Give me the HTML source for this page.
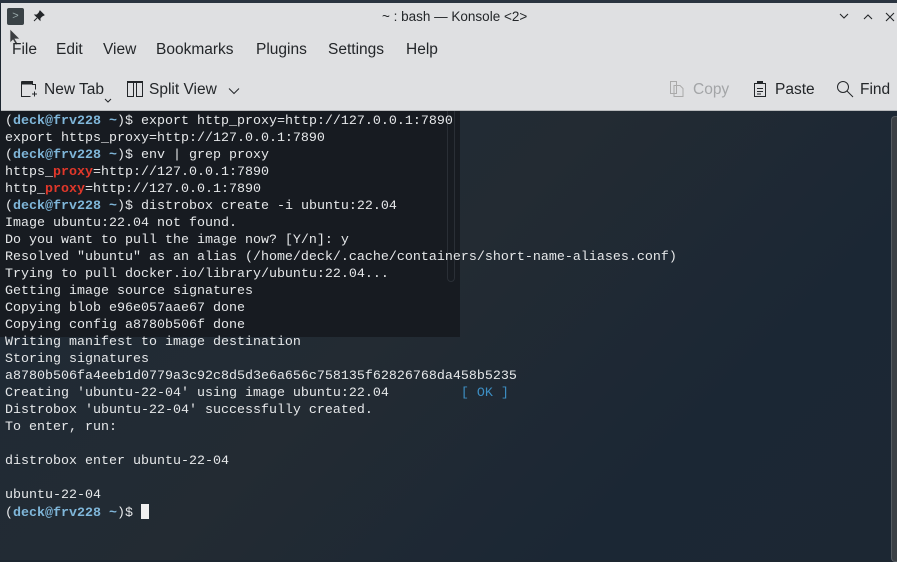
<!DOCTYPE html>
<html><head><style>
body{margin:0;width:897px;height:560px;overflow:hidden;background:#1d2630;font-family:"Liberation Sans","DejaVu Sans",sans-serif;position:relative}
.top{position:absolute;left:0;top:0;width:897px;height:3px;background:#2a3440}
.win{position:absolute;left:1px;top:3px;width:896px;height:107px;background:#dfe0e2;border-bottom:1px solid #b8babc}
.t{position:absolute;font-size:15.5px;color:#232629;white-space:nowrap}
.term{position:absolute;left:0;top:111px;width:897px;height:449px;background:linear-gradient(135deg,#1e2a36 0%,#232b33 45%,#1b2734 75%,#1c2733 100%)}
.panel{position:absolute;left:0;top:111px;width:460px;height:226px;background:#171b21}
.panel .sb{position:absolute;left:447px;top:0;width:6px;height:170px;border:1px solid #2a2f36;border-top:none;border-radius:0 0 4px 4px}
pre{position:absolute;left:5px;top:113px;margin:0;font-family:"Liberation Mono","DejaVu Sans Mono",monospace;font-size:13.33px;line-height:17px;color:#e6e8ea}
.b{color:#7fb6d9;font-weight:bold}
.r{color:#e0372a;font-weight:bold}
.ok{color:#3d8fc4}
.cur{display:inline-block;width:8px;height:15px;background:#f0f0f0;vertical-align:-3px}
.scroll{position:absolute;left:891px;top:116px;width:6px;height:444px;background:#3b4045;border-radius:4px 0 0 4px;border:1px solid #555b60;border-right:none}
</style></head><body>
<div class="top"></div>
<div class="term"></div>
<div class="panel"><div class="sb"></div></div>
<div class="scroll"></div>
<div class="win">
  <div style="position:absolute;left:6px;top:5px;width:17px;height:17px;background:#3a4246;border-radius:2px;color:#9aa;font-size:11px;text-align:center;line-height:17px">&gt;</div>
  <svg style="position:absolute;left:32px;top:7px" width="12" height="12" viewBox="0 0 12 12"><path d="M7 1l4 4-2 1-2 2 0 2-5-5 2 0 2-2z M4 8l-3 3" stroke="#232629" fill="#232629" stroke-width="1"/></svg>
  <svg style="position:absolute;left:8px;top:25px" width="12" height="18" viewBox="0 0 12 18"><path d="M1 1v14l3-3 3 5 2-1-3-5h5z" fill="#3a3d40" stroke="#ddd" stroke-width=".7"/></svg>
  <div class="t" style="left:381px;top:6px;font-size:13.5px">~ : bash — Konsole &lt;2&gt;</div>
  <svg style="position:absolute;left:838px;top:9px" width="60" height="10" viewBox="0 0 60 10"><path d="M1 2l4 4 4-4 M25 7l4-4 4 4 M47 1l8 8 M55 1l-8 8" stroke="#232629" fill="none" stroke-width="1.1"/></svg>
  <div class="t" style="left:11px;top:38px">File</div>
  <div class="t" style="left:55px;top:38px">Edit</div>
  <div class="t" style="left:102px;top:38px">View</div>
  <div class="t" style="left:155px;top:38px">Bookmarks</div>
  <div class="t" style="left:255px;top:38px">Plugins</div>
  <div class="t" style="left:327px;top:38px">Settings</div>
  <div class="t" style="left:405px;top:38px">Help</div>
  <svg style="position:absolute;left:19px;top:77px" width="18" height="18" viewBox="0 0 18 18"><path d="M1.5 1.5h11v3h3v5 M1.5 1.5v15h9 M12 14h5 M14.5 11.5v5" stroke="#232629" fill="none"/><rect x="1.5" y="1.5" width="11" height="3" fill="#232629"/></svg>
  <div class="t" style="left:43px;top:78px">New Tab</div>
  <svg style="position:absolute;left:103px;top:95px" width="8" height="5" viewBox="0 0 8 5"><path d="M1 1l3 3 3-3" stroke="#232629" fill="none"/></svg>
  <svg style="position:absolute;left:125px;top:77px" width="18" height="18" viewBox="0 0 18 18"><path d="M1.5 1.5h6v15h-6z M10.5 1.5h6v15h-6z" stroke="#232629" fill="none"/><rect x="1" y="1" width="16" height="2" fill="#232629"/></svg>
  <div class="t" style="left:148px;top:78px">Split View</div>
  <svg style="position:absolute;left:227px;top:84px" width="12" height="8" viewBox="0 0 12 8"><path d="M1 1.5l5 5 5-5" stroke="#232629" fill="none"/></svg>
  <svg style="position:absolute;left:668px;top:77px" width="16" height="18" viewBox="0 0 16 18"><path d="M1.5 1.5h6v12h-6z M5 5.5h6l3 3v8h-9z" stroke="#aaa" fill="none"/></svg>
  <div class="t" style="left:692px;top:78px;color:#a3a5a7">Copy</div>
  <svg style="position:absolute;left:752px;top:77px" width="14" height="18" viewBox="0 0 14 18"><path d="M1.5 3.5h11v13h-11z M4 8.5h6 M4 11.5h6 M4 14h4" stroke="#232629" fill="none"/><rect x="4" y="1" width="6" height="3" fill="#232629"/></svg>
  <div class="t" style="left:774px;top:78px">Paste</div>
  <svg style="position:absolute;left:835px;top:77px" width="18" height="18" viewBox="0 0 18 18"><circle cx="7" cy="7" r="5.5" stroke="#232629" fill="none"/><path d="M11 11l6 6" stroke="#232629"/></svg>
  <div class="t" style="left:859px;top:78px">Find</div>
</div>
<pre>(<span class="b">deck@frv228 ~</span>)$ export http_proxy=http://127.0.0.1:7890
export https_proxy=http://127.0.0.1:7890
(<span class="b">deck@frv228 ~</span>)$ env | grep proxy
https_<span class="r">proxy</span>=http://127.0.0.1:7890
http_<span class="r">proxy</span>=http://127.0.0.1:7890
(<span class="b">deck@frv228 ~</span>)$ distrobox create -i ubuntu:22.04
Image ubuntu:22.04 not found.
Do you want to pull the image now? [Y/n]: y
Resolved "ubuntu" as an alias (/home/deck/.cache/containers/short-name-aliases.conf)
Trying to pull docker.io/library/ubuntu:22.04...
Getting image source signatures
Copying blob e96e057aae67 done
Copying config a8780b506f done
Writing manifest to image destination
Storing signatures
a8780b506fa4eeb1d0779a3c92c8d5d3e6a656c758135f62826768da458b5235
Creating 'ubuntu-22-04' using image ubuntu:22.04         <span class="ok">[ OK ]</span>
Distrobox 'ubuntu-22-04' successfully created.
To enter, run:

distrobox enter ubuntu-22-04

ubuntu-22-04
(<span class="b">deck@frv228 ~</span>)$ <span class="cur"></span></pre>
</body></html>
